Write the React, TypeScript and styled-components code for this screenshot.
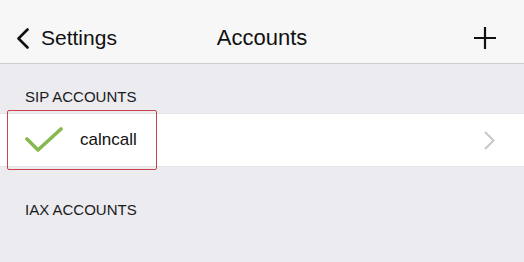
import React from 'react';
import styled, { createGlobalStyle } from 'styled-components';

const GlobalStyle = createGlobalStyle`
  html, body {
    margin: 0;
    padding: 0;
    background: #ebebf0;
  }
  body {
    font-family: "Liberation Sans", Arial, sans-serif;
    -webkit-font-smoothing: antialiased;
  }
`;

const Screen = styled.div`
  width: 524px;
  height: 262px;
  background: #ebebf0;
  overflow: hidden;
  display: flex;
  flex-direction: column;
`;

const NavBar = styled.header`
  box-sizing: border-box;
  height: 64px;
  background: #f7f7f7;
  border-bottom: 1px solid #cfcfd3;
  display: grid;
  grid-template-columns: 1fr auto 1fr;
  align-items: center;
  padding: 13px 0 0;
  color: #111;
`;

const BackButton = styled.div`
  display: flex;
  align-items: center;
  gap: 12px;
  font-size: 21px;
  padding-left: 16px;
`;

const Title = styled.h1`
  margin: 0;
  font-size: 22px;
  font-weight: 400;
  margin-top: -1px;
`;

const NavRight = styled.div`
  display: flex;
  justify-content: flex-end;
  padding-right: 28px;
`;

const SectionHeader = styled.div<{ $top: number }>`
  padding: ${(p) => p.$top}px 25px 0;
  height: 24px;
  font-size: 15px;
  color: #1a1a1a;
  line-height: 17px;
`;

const Group = styled.div`
  background: #fff;
  border-top: 1px solid #e3e3e8;
  border-bottom: 1px solid #e3e3e8;
  margin-top: 1px;
`;

const Row = styled.div`
  position: relative;
  height: 52px;
  display: flex;
  align-items: center;
  padding: 0 29px 0 25px;
`;

const Highlight = styled.div`
  position: absolute;
  left: 7px;
  top: -4px;
  width: 148px;
  height: 58px;
  border: 1.5px solid #c9434a;
  border-radius: 2px;
`;

const CheckIcon = styled.svg`
  width: 38px;
  height: 26px;
  flex: none;
`;

const RowLabel = styled.span`
  margin-left: 17px;
  font-size: 17px;
  color: #111;
  flex: 1;
  margin-top: -1px;
`;

const Chevron = styled.svg`
  width: 11px;
  height: 19px;
  flex: none;
`;

export default function App() {
  return (
    <>
      <GlobalStyle />
      <Screen>
        <NavBar>
          <BackButton>
            <svg width="13" height="21" viewBox="0 0 13 21">
              <path d="M11.5 1.5 L2.5 10.5 L11.5 19.5" fill="none" stroke="#111" strokeWidth="2.6" strokeLinecap="round" strokeLinejoin="round" />
            </svg>
            <span>Settings</span>
          </BackButton>
          <Title>Accounts</Title>
          <NavRight>
            <svg width="22" height="22" viewBox="0 0 22 22">
              <path d="M11 0 V22 M0 11 H22" stroke="#111" strokeWidth="2.2" />
            </svg>
          </NavRight>
        </NavBar>

        <SectionHeader $top={24}>SIP ACCOUNTS</SectionHeader>
        <Group>
          <Row>
            <Highlight />
            <CheckIcon viewBox="0 0 38 26">
              <path d="M2 12 L13 23 L36 2" fill="none" stroke="#86b84e" strokeWidth="3.6" strokeLinecap="round" strokeLinejoin="round" />
            </CheckIcon>
            <RowLabel>calncall</RowLabel>
            <Chevron viewBox="0 0 11 19">
              <path d="M1.5 1.5 L9.5 9.5 L1.5 17.5" fill="none" stroke="#c7c7cc" strokeWidth="2" strokeLinecap="round" strokeLinejoin="round" />
            </Chevron>
          </Row>
        </Group>

        <SectionHeader $top={34}>IAX ACCOUNTS</SectionHeader>
      </Screen>
    </>
  );
}
